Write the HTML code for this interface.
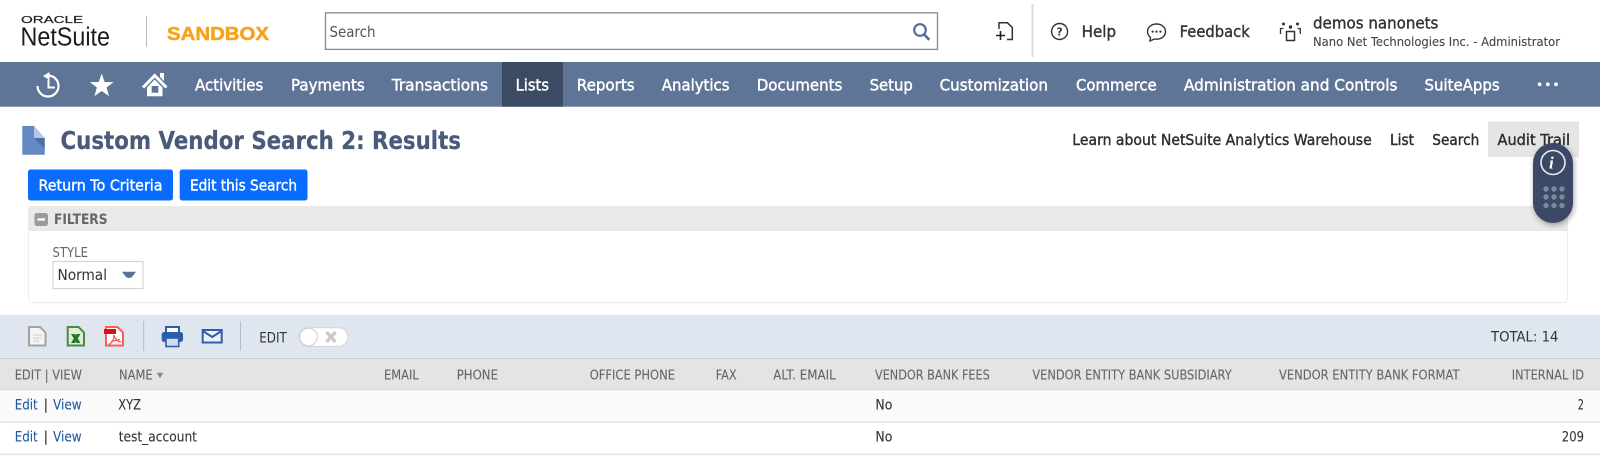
<!DOCTYPE html>
<html lang="en"><head><meta charset="utf-8"><title>Custom Vendor Search 2: Results</title>
<style>
html,body{margin:0;padding:0;background:#fff;width:1600px;height:456px;overflow:hidden}
svg{display:block}
text{font-family:"DejaVu Sans","Liberation Sans",sans-serif;white-space:pre}
.n{font-size:16px;fill:#fff;stroke:#fff;stroke-width:.45}
.h{font-size:16px;fill:#333;stroke:#333;stroke-width:.4}
.l{font-size:15px;fill:#2e2e2e;stroke:#2e2e2e;stroke-width:.4}
.th{font-size:13px;fill:#666;stroke:#666;stroke-width:.1}
.td{font-size:14px;fill:#333;stroke:#333;stroke-width:.1}
.a{font-size:14px;fill:#255a9e;stroke:#255a9e;stroke-width:.1}
.b{font-size:15px;fill:#fff;stroke:#fff;stroke-width:.4}
</style></head><body>
<svg width="1600" height="456" viewBox="0 0 1600 456" xmlns="http://www.w3.org/2000/svg">
<defs><filter id="s" x="-40%" y="-20%" width="180%" height="140%"><feDropShadow dx="1" dy="2" stdDeviation="3" flood-color="#000" flood-opacity=".35"/></filter></defs>
<rect width="1600" height="456" fill="#fff"/>

<!-- Header -->
<text x="21" y="23" style="font-family:'Liberation Sans',sans-serif;font-size:10px;fill:#222;stroke:#222;stroke-width:.2" textLength="62" lengthAdjust="spacingAndGlyphs">ORACLE</text>
<text x="20.5" y="45.5" style="font-family:'Liberation Sans',sans-serif;font-size:25.5px;fill:#1c1c1c" textLength="89.5" lengthAdjust="spacingAndGlyphs">NetSuite</text>
<rect x="146" y="16" width="1" height="31" fill="#bbb"/>
<text x="167" y="40" style="font-family:'Liberation Sans',sans-serif;font-weight:bold;font-size:18.5px;fill:#f8a11b;stroke:#f8a11b;stroke-width:.5" textLength="102" lengthAdjust="spacingAndGlyphs">SANDBOX</text>
<rect x="325.5" y="12.8" width="612" height="36.6" fill="#fff" stroke="#8a8a8a" stroke-width="1.3"/>
<text x="329.5" y="37" style="font-size:15.5px;fill:#555" textLength="46" lengthAdjust="spacingAndGlyphs">Search</text>
<circle cx="920" cy="30" r="5.8" fill="none" stroke="#4f6d9c" stroke-width="2.2"/>
<path d="M924.2 34.5 929.3 39.8" stroke="#4f6d9c" stroke-width="2.6" fill="none"/>
<path d="M999 29V22.8H1007.5L1012.3 27.5V39.5H1007" fill="none" stroke="#333" stroke-width="1.5"/>
<path d="M996 35.5H1005M1000.5 31V40" fill="none" stroke="#222" stroke-width="1.6"/>
<rect x="1031.5" y="4" width="2" height="53" fill="#ddd"/>
<circle cx="1059.6" cy="31.5" r="8" fill="none" stroke="#333" stroke-width="1.4"/>
<text x="1056.6" y="35.5" style="font-size:11px;fill:#333;font-weight:bold" textLength="6" lengthAdjust="spacingAndGlyphs">?</text>
<text x="1081.6" y="37" class="h" textLength="34.5" lengthAdjust="spacingAndGlyphs">Help</text>
<path d="M1156.5 24C1151.3 24 1147.5 27.4 1147.5 31.6C1147.5 34 1148.7 36 1150.5 37.3L1150 41L1154.4 39C1155.1 39.2 1155.8 39.2 1156.5 39.2C1161.7 39.2 1165.5 35.8 1165.5 31.6S1161.7 24 1156.5 24Z" fill="none" stroke="#333" stroke-width="1.4"/>
<circle cx="1152.6" cy="31.6" r="1.1" fill="#333"/><circle cx="1156.5" cy="31.6" r="1.1" fill="#333"/><circle cx="1160.4" cy="31.6" r="1.1" fill="#333"/>
<text x="1179.6" y="37" class="h" textLength="70.2" lengthAdjust="spacingAndGlyphs">Feedback</text>
<circle cx="1283.5" cy="24" r="1.5" fill="#333"/><circle cx="1290.5" cy="27" r="1.7" fill="#333"/><circle cx="1297.5" cy="24" r="1.5" fill="#333"/>
<path d="M1283.5 28.5H1280.5V34M1297.5 28.5H1300.3V34" fill="none" stroke="#333" stroke-width="1.3"/>
<path d="M1286.5 31.5H1294.5V40.5H1286.5Z" fill="none" stroke="#333" stroke-width="1.5"/>
<text x="1313" y="28.7" class="h" textLength="125.4" lengthAdjust="spacingAndGlyphs">demos nanonets</text>
<text x="1313" y="46" style="font-size:12.5px;fill:#444;stroke:#444;stroke-width:.1" textLength="247" lengthAdjust="spacingAndGlyphs">Nano Net Technologies Inc. - Administrator</text>

<!-- Nav -->
<rect y="62" width="1600" height="44.7" fill="#5f7597"/>
<rect x="502" y="62" width="61" height="44.7" fill="#3c4b64"/>
<path d="M48 75.5A10.5 10.5 0 1 1 37.5 86" fill="none" stroke="#fff" stroke-width="2.2"/>
<path d="M43 76 49.5 72V80Z" fill="#fff"/>
<path d="M48.5 79.5V87.5H55" fill="none" stroke="#fff" stroke-width="2"/>
<path d="M101.7 73.5 104.6 82 113.6 82.1 106.5 87.5 109 96.1 101.7 91 94.4 96.1 96.9 87.5 89.8 82.1 98.8 82Z" fill="#fff"/>
<path d="M143 87.5 154.7 75.5 166.5 87.5" fill="none" stroke="#fff" stroke-width="3"/>
<path d="M160 73H164V81L160 77Z" fill="#fff"/>
<path d="M147 87.5 154.7 79.5 162.5 87.5V96.3H147Z" fill="#fff"/>
<rect x="151.7" y="86" width="6.6" height="6.7" fill="#5f7597"/>
<g class="nav">
<text class="n" x="195" y="90.7" textLength="68.3" lengthAdjust="spacingAndGlyphs">Activities</text>
<text class="n" x="291" y="90.7" textLength="73.7" lengthAdjust="spacingAndGlyphs">Payments</text>
<text class="n" x="391.7" y="90.7" textLength="96.3" lengthAdjust="spacingAndGlyphs">Transactions</text>
<text class="n" x="515.6" y="90.7" textLength="33.4" lengthAdjust="spacingAndGlyphs">Lists</text>
<text class="n" x="576.8" y="90.7" textLength="57.8" lengthAdjust="spacingAndGlyphs">Reports</text>
<text class="n" x="661.8" y="90.7" textLength="67.7" lengthAdjust="spacingAndGlyphs">Analytics</text>
<text class="n" x="756.7" y="90.7" textLength="85.7" lengthAdjust="spacingAndGlyphs">Documents</text>
<text class="n" x="869.6" y="90.7" textLength="43.2" lengthAdjust="spacingAndGlyphs">Setup</text>
<text class="n" x="939.6" y="90.7" textLength="108.4" lengthAdjust="spacingAndGlyphs">Customization</text>
<text class="n" x="1076" y="90.7" textLength="80.7" lengthAdjust="spacingAndGlyphs">Commerce</text>
<text class="n" x="1184" y="90.7" textLength="213.5" lengthAdjust="spacingAndGlyphs">Administration and Controls</text>
<text class="n" x="1424.5" y="90.7" textLength="75.1" lengthAdjust="spacingAndGlyphs">SuiteApps</text>
</g>
<circle cx="1539.6" cy="84.3" r="1.9" fill="#fff"/><circle cx="1547.8" cy="84.3" r="1.9" fill="#fff"/><circle cx="1556" cy="84.3" r="1.9" fill="#fff"/>

<!-- Title -->
<path d="M22.3 126H34L44.7 138V154.7H22.3Z" fill="#6488c4"/>
<path d="M34 126 44.7 138H34Z" fill="#b6c5e2"/>
<path d="M34 138H44.7V149Z" fill="#4f6fa8"/>
<text x="60.5" y="149" style="font-size:25px;font-weight:bold;fill:#4a5b7a;stroke:#4a5b7a;stroke-width:.25" textLength="400.5" lengthAdjust="spacingAndGlyphs">Custom Vendor Search 2: Results</text>

<rect x="1488" y="121.5" width="91" height="35.5" fill="#e5e5e5"/>
<text class="l" x="1072.3" y="145" textLength="299.4" lengthAdjust="spacingAndGlyphs">Learn about NetSuite Analytics Warehouse</text>
<text class="l" x="1390" y="145" textLength="24" lengthAdjust="spacingAndGlyphs">List</text>
<text class="l" x="1432.3" y="145" textLength="47" lengthAdjust="spacingAndGlyphs">Search</text>
<text class="l" x="1497.5" y="145" textLength="72.5" lengthAdjust="spacingAndGlyphs">Audit Trail</text>

<!-- Buttons -->
<rect x="28" y="169.5" width="145" height="31" rx="2.5" fill="#0a6cff"/>
<rect x="179.7" y="169.5" width="127.8" height="31" rx="2.5" fill="#0a6cff"/>
<text class="b" x="38.5" y="190.7" textLength="124" lengthAdjust="spacingAndGlyphs">Return To Criteria</text>
<text class="b" x="190" y="190.7" textLength="107" lengthAdjust="spacingAndGlyphs">Edit this Search</text>

<!-- Filters -->
<rect x="28.5" y="206.5" width="1539" height="96" rx="4" fill="#fff" stroke="#ececec"/>
<path d="M28 231V210a4 4 0 0 1 4-4H1564a4 4 0 0 1 4 4V231Z" fill="#e9e9e9"/>
<rect x="34.5" y="213" width="13.5" height="13" rx="2.5" fill="#9b9b9b"/>
<rect x="37.5" y="218.3" width="7.5" height="2.4" fill="#fff"/>
<text x="54" y="224" style="font-size:14px;font-weight:bold;fill:#666" textLength="53.5" lengthAdjust="spacingAndGlyphs">FILTERS</text>
<text x="52.5" y="257" style="font-size:13.5px;fill:#666" textLength="35.5" lengthAdjust="spacingAndGlyphs">STYLE</text>
<rect x="53" y="261.5" width="90" height="27" fill="#fff" stroke="#d4d4d4" stroke-width="1.2"/>
<text x="57.5" y="280" style="font-size:15px;fill:#333" textLength="49.5" lengthAdjust="spacingAndGlyphs">Normal</text>
<path d="M122 271.7H136L132 277Q129 279 126 277Z" fill="#5b7299"/>

<!-- Toolbar -->
<rect y="314.7" width="1600" height="43.3" fill="#dfe6f0"/>
<path d="M29 327H40L45.5 332.5V345.5H29Z" fill="#f4f4f4" stroke="#a3a3a3" stroke-width="2"/>
<path d="M33 335H42M33 338H42M33 341H39" stroke="#d0d0d0" stroke-width="1"/>
<path d="M67.7 327H78.5L84 332.5V345.5H67.7Z" fill="#e3ecd8" stroke="#4b8c3f" stroke-width="2"/>
<path d="M71 334H75L80.5 343H76.5ZM76.5 334H80.5L75 343H71Z" fill="#1f7a2a"/>
<path d="M106 327H117.5L123 332.5V345.5H106Z" fill="#fff" stroke="#fb5b5b" stroke-width="2"/>
<rect x="104" y="329" width="12" height="5" fill="#d9101a"/>
<path d="M114 335C114 341 111 344 108.5 344.3M114 335C115 339 118 342 121.5 342M111 341.5 120 339.5" fill="none" stroke="#fb5b5b" stroke-width="1.3"/>
<rect x="143.2" y="321" width="1" height="30" fill="#b5bcc6"/>
<path d="M166 333V327H179V333" fill="#fff" stroke="#2d5ea9" stroke-width="2"/>
<rect x="161.7" y="332" width="21.3" height="10" rx="2.5" fill="#2d5ea9"/>
<rect x="166" y="338" width="12.7" height="8.5" fill="#d5dcea" stroke="#2d5ea9" stroke-width="1.6"/>
<rect x="202.7" y="330" width="19" height="12.5" fill="#eef2f8" stroke="#2d5ea9" stroke-width="2"/>
<path d="M203 331 212.2 337 221.5 331" fill="none" stroke="#2d5ea9" stroke-width="2"/>
<rect x="240" y="321" width="1" height="30" fill="#b5bcc6"/>
<text x="259.3" y="342.3" style="font-size:14px;fill:#333" textLength="27.4" lengthAdjust="spacingAndGlyphs">EDIT</text>
<rect x="298.8" y="327.8" width="49" height="18.6" rx="9.3" fill="#fff" stroke="#d6d6d6"/>
<circle cx="308.5" cy="337" r="8.8" fill="#fff" stroke="#cfcfcf"/>
<path d="M326.5 332 335.5 342M335.5 332 326.5 342" stroke="#c9c9c9" stroke-width="3.4"/>
<text x="1491" y="341.7" style="font-size:14.5px;fill:#333" textLength="67.4" lengthAdjust="spacingAndGlyphs">TOTAL: 14</text>

<!-- Table -->
<rect y="358" width="1600" height="32" fill="#e4e4e4"/>
<rect y="358" width="1600" height="1" fill="#ccc"/>
<rect y="389.3" width="1600" height="1" fill="#d9d9d9"/>
<rect y="390.3" width="1600" height="31" fill="#fafafa"/>
<rect y="421.3" width="1600" height="1.7" fill="#e5e5e5"/>
<rect y="453.7" width="1600" height="1.3" fill="#e3e3e3"/>
<text class="th" x="14.7" y="379.3" textLength="67.3" lengthAdjust="spacingAndGlyphs">EDIT | VIEW</text>
<text class="th" x="119" y="379.3" textLength="33.7" lengthAdjust="spacingAndGlyphs">NAME</text>
<path d="M156.7 372.7H163.3L160 378.3Z" fill="#888"/>
<text class="th" x="384" y="379.3" textLength="34.7" lengthAdjust="spacingAndGlyphs">EMAIL</text>
<text class="th" x="456.7" y="379.3" textLength="41.3" lengthAdjust="spacingAndGlyphs">PHONE</text>
<text class="th" x="589.7" y="379.3" textLength="85.3" lengthAdjust="spacingAndGlyphs">OFFICE PHONE</text>
<text class="th" x="715.7" y="379.3" textLength="21" lengthAdjust="spacingAndGlyphs">FAX</text>
<text class="th" x="773.3" y="379.3" textLength="62.4" lengthAdjust="spacingAndGlyphs">ALT. EMAIL</text>
<text class="th" x="875" y="379.3" textLength="114.8" lengthAdjust="spacingAndGlyphs">VENDOR BANK FEES</text>
<text class="th" x="1032.4" y="379.3" textLength="199.3" lengthAdjust="spacingAndGlyphs">VENDOR ENTITY BANK SUBSIDIARY</text>
<text class="th" x="1279" y="379.3" textLength="180.5" lengthAdjust="spacingAndGlyphs">VENDOR ENTITY BANK FORMAT</text>
<text class="th" x="1511.8" y="379.3" textLength="72.2" lengthAdjust="spacingAndGlyphs">INTERNAL ID</text>

<text class="a" x="14.7" y="409.3" textLength="23" lengthAdjust="spacingAndGlyphs">Edit</text>
<text class="td" x="43.5" y="409.3">|</text>
<text class="a" x="53" y="409.3" textLength="28.7" lengthAdjust="spacingAndGlyphs">View</text>
<text class="td" x="118.3" y="409.3" textLength="22.7" lengthAdjust="spacingAndGlyphs">XYZ</text>
<text class="td" x="875.4" y="409.3" textLength="17" lengthAdjust="spacingAndGlyphs">No</text>
<text class="td" x="1577.8" y="409.3" textLength="6.2" lengthAdjust="spacingAndGlyphs">2</text>

<text class="a" x="14.7" y="441.7" textLength="23" lengthAdjust="spacingAndGlyphs">Edit</text>
<text class="td" x="43.5" y="441.7">|</text>
<text class="a" x="53" y="441.7" textLength="28.7" lengthAdjust="spacingAndGlyphs">View</text>
<text class="td" x="118.7" y="441.7" textLength="78.3" lengthAdjust="spacingAndGlyphs">test_account</text>
<text class="td" x="875.4" y="441.7" textLength="17" lengthAdjust="spacingAndGlyphs">No</text>
<text class="td" x="1561.8" y="441.7" textLength="22.2" lengthAdjust="spacingAndGlyphs">209</text>

<!-- Info widget -->
<rect x="1533" y="143" width="40" height="80" rx="20" fill="#3a4a66" filter="url(#s)"/>
<circle cx="1553" cy="162.5" r="12" fill="none" stroke="#e8ebf0" stroke-width="1.6"/>
<text x="1549" y="168.5" style="font-family:'Liberation Serif',serif;font-style:italic;font-weight:bold;font-size:17px;fill:#fff">i</text>
<g fill="#7d879b">
<circle cx="1546" cy="189" r="2.7"/><circle cx="1554" cy="189" r="2.7"/><circle cx="1562" cy="189" r="2.7"/>
<circle cx="1546" cy="197" r="2.7"/><circle cx="1554" cy="197" r="2.7"/><circle cx="1562" cy="197" r="2.7"/>
<circle cx="1546" cy="205.5" r="2.7"/><circle cx="1554" cy="205.5" r="2.7"/><circle cx="1562" cy="205.5" r="2.7"/>
</g>
</svg>
</body></html>
